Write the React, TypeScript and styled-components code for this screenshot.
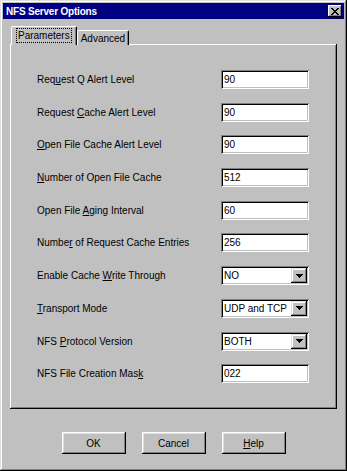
import React from "react";
import styled, { createGlobalStyle } from "styled-components";

const GlobalStyle = createGlobalStyle`
  html, body {
    margin: 0;
    padding: 0;
    background: #c0c0c0;
  }
  body {
    font-family: "Liberation Sans", Arial, sans-serif;
    font-size: 10px;
    color: #000;
  }
`;

const Window = styled.div`
  box-sizing: border-box;
  width: 347px;
  height: 471px;
  padding: 3px;
  background: #c0c0c0;
  box-shadow: inset -1px -1px #000, inset 1px 1px #dfdfdf,
    inset -2px -2px #808080, inset 2px 2px #fff;
  display: flex;
  flex-direction: column;
`;

const TitleBar = styled.div`
  height: 16px;
  background: #000080;
  color: #fff;
  display: flex;
  align-items: center;
  justify-content: space-between;
  padding: 0 2px 0 3px;
`;

const Title = styled.span`
  font-weight: bold;
  font-size: 10px;
  letter-spacing: -0.2px;
`;

const CloseButton = styled.div`
  box-sizing: border-box;
  width: 14px;
  height: 12px;
  background: #c0c0c0;
  box-shadow: inset -1px -1px #000, inset 1px 1px #fff,
    inset -2px -2px #808080;
  display: flex;
  align-items: center;
  justify-content: center;
`;

const Content = styled.div`
  padding: 7px 0 0 7px;
  display: flex;
  flex-direction: column;
`;

const TabStrip = styled.div`
  display: flex;
  align-items: flex-end;
  height: 19px;
  padding-left: 1px;
  margin-bottom: -1px;
  position: relative;
  z-index: 1;
`;

const Tab = styled.div<{ $active?: boolean }>`
  box-sizing: border-box;
  height: ${(p) => (p.$active ? 19 : 15)}px;
  padding: 0 ${(p) => (p.$active ? 5 : 2)}px;
  background: #c0c0c0;
  border-top: 1px solid #fff;
  border-left: 1px solid #fff;
  border-right: 1px solid #000;
  border-radius: 2px 2px 0 0;
  box-shadow: inset -1px 0 #808080;
  display: flex;
  align-items: center;
  ${(p) => (p.$active ? "padding-bottom: 2px;" : "")}
`;

const TabLabel = styled.span<{ $focused?: boolean }>`
  padding: 0 1px;
  outline: ${(p) => (p.$focused ? "1px dotted #000" : "none")};
  line-height: 13px;
`;

const Panel = styled.div`
  box-sizing: border-box;
  width: 327px;
  height: 365px;
  padding: 26px 0 0 27px;
  box-shadow: inset -1px -1px #000, inset 1px 1px #fff,
    inset -2px -2px #808080;
  display: grid;
  grid-template-columns: 184px 88px;
  grid-auto-rows: 19px;
  row-gap: 13.7px;
  align-content: start;
  align-items: center;
`;

const FieldLabel = styled.label`
  white-space: nowrap;
`;

const Field = styled.div`
  box-sizing: border-box;
  height: 19px;
  background: #fff;
  box-shadow: inset 1px 1px #808080, inset -1px -1px #fff,
    inset 2px 2px #000, inset -2px -2px #c0c0c0;
  padding: 0 2px 0 3px;
  display: flex;
  align-items: center;
  justify-content: space-between;
  white-space: nowrap;
`;

const DropButton = styled.div`
  box-sizing: border-box;
  flex: none;
  width: 16px;
  height: 15px;
  background: #c0c0c0;
  box-shadow: inset -1px -1px #000, inset 1px 1px #dfdfdf,
    inset -2px -2px #808080, inset 2px 2px #fff;
  display: flex;
  align-items: center;
  justify-content: center;
`;

const ButtonRow = styled.div`
  display: flex;
  justify-content: center;
  gap: 16px;
  margin-top: 23px;
  padding-right: 7px;
`;

const Button = styled.div`
  box-sizing: border-box;
  width: 64px;
  height: 22px;
  background: #c0c0c0;
  box-shadow: inset -1px -1px #000, inset 1px 1px #fff,
    inset -2px -2px #808080, inset 2px 2px #dfdfdf;
  display: flex;
  align-items: center;
  justify-content: center;
`;

interface Param {
  label: string;
  key: number;
  value: string;
  combo?: boolean;
}

const params: Param[] = [
  { label: "Request Q Alert Level", key: 3, value: "90" },
  { label: "Request Cache Alert Level", key: 8, value: "90" },
  { label: "Open File Cache Alert Level", key: 0, value: "90" },
  { label: "Number of Open File Cache", key: 0, value: "512" },
  { label: "Open File Aging Interval", key: 10, value: "60" },
  { label: "Number of Request Cache Entries", key: 5, value: "256" },
  { label: "Enable Cache Write Through", key: 13, value: "NO", combo: true },
  { label: "Transport Mode", key: 0, value: "UDP and TCP", combo: true },
  { label: "NFS Protocol Version", key: 4, value: "BOTH", combo: true },
  { label: "NFS File Creation Mask", key: 21, value: "022" },
];

const Mnemonic = ({ text, at }: { text: string; at: number }) => (
  <>
    {text.slice(0, at)}
    <u>{text.charAt(at)}</u>
    {text.slice(at + 1)}
  </>
);

const CloseIcon = () => (
  <svg width="8" height="7" viewBox="0 0 8 7">
    <path
      d="M0 0h2v1h1v1h2V1h1V0h2v1H7v1H6v1H5v1h1v1h1v1h1v1H6V6H5V5H3v1H2v1H0V6h1V5h1V4h1V3H2V2H1V1H0z"
      fill="#000"
    />
  </svg>
);

const ArrowIcon = () => (
  <svg width="7" height="4" viewBox="0 0 7 4">
    <path d="M0 0h7v1H6v1H5v1H4v1H3V3H2V2H1V1H0z" fill="#000" />
  </svg>
);

const App = () => (
  <>
    <GlobalStyle />
    <Window>
      <TitleBar>
        <Title>NFS Server Options</Title>
        <CloseButton>
          <CloseIcon />
        </CloseButton>
      </TitleBar>
      <Content>
        <TabStrip>
          <Tab $active>
            <TabLabel $focused>Parameters</TabLabel>
          </Tab>
          <Tab>
            <TabLabel>Advanced</TabLabel>
          </Tab>
        </TabStrip>
        <Panel>
          {params.map((p) => (
            <React.Fragment key={p.label}>
              <FieldLabel>
                <Mnemonic text={p.label} at={p.key} />
              </FieldLabel>
              <Field>
                <span>{p.value}</span>
                {p.combo && (
                  <DropButton>
                    <ArrowIcon />
                  </DropButton>
                )}
              </Field>
            </React.Fragment>
          ))}
        </Panel>
        <ButtonRow>
          <Button>OK</Button>
          <Button>Cancel</Button>
          <Button>
            <Mnemonic text="Help" at={0} />
          </Button>
        </ButtonRow>
      </Content>
    </Window>
  </>
);

export default App;
